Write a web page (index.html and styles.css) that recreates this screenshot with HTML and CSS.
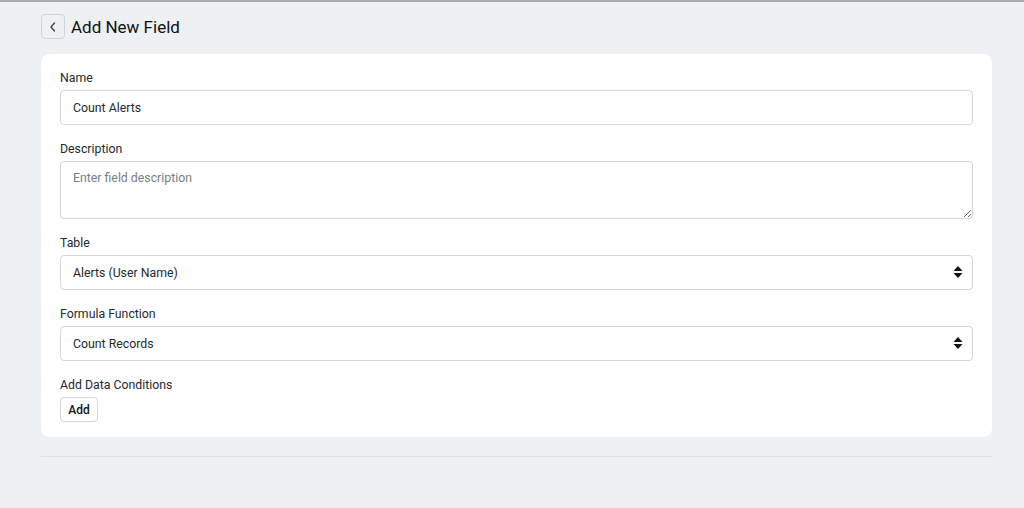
FILE: index.html
```html
<!DOCTYPE html>
<html lang="en">
<head>
    <meta charset="UTF-8">
    <meta name="viewport" content="width=device-width, initial-scale=1.0">
    <title>Add New Field</title>
    <link rel="stylesheet" href="styles.css">
</head>
<body>
    <div class="page">
        <div class="header">
            <button class="back-btn" aria-label="Back">
                <svg width="10" height="12" viewBox="0 0 10 12"><path d="M6.5 2 L3 6 L6.5 10" fill="none" stroke="#444" stroke-width="1.4" stroke-linecap="round" stroke-linejoin="round"/></svg>
            </button>
            <h1>Add New Field</h1>
        </div>

        <div class="card">
            <div class="field">
                <label>Name</label>
                <input type="text" class="input" value="Count Alerts">
            </div>

            <div class="field">
                <label>Description</label>
                <textarea class="input textarea" placeholder="Enter field description"></textarea>
            </div>

            <div class="field">
                <label>Table</label>
                <div class="select-wrap">
                    <select class="input select">
                        <option>Alerts (User Name)</option>
                    </select>
                    <svg class="select-arrow" width="10" height="14" viewBox="0 0 10 14"><path d="M5 1 L9.5 6 H0.5 Z M5 13 L9.5 8 H0.5 Z" fill="#111"/></svg>
                </div>
            </div>

            <div class="field">
                <label>Formula Function</label>
                <div class="select-wrap">
                    <select class="input select">
                        <option>Count Records</option>
                    </select>
                    <svg class="select-arrow" width="10" height="14" viewBox="0 0 10 14"><path d="M5 1 L9.5 6 H0.5 Z M5 13 L9.5 8 H0.5 Z" fill="#111"/></svg>
                </div>
            </div>

            <div class="field last">
                <label>Add Data Conditions</label>
                <div><button class="add-btn">Add</button></div>
            </div>
        </div>

        <hr class="divider">
    </div>
</body>
</html>
```

FILE: styles.css
```css
body {
    margin: 0;
    background-color: #eef1f4;
    border-top: 2px solid #a9abad;
    font-family: Roboto, "Liberation Sans", sans-serif;
    color: #1c1e21;
    height: 506px;
    overflow: hidden;
}

.page {
    width: 951px;
    margin-left: 41px;
    padding-top: 12px;
}

.header {
    display: flex;
    align-items: center;
    gap: 6px;
    height: 25px;
    margin-bottom: 15px;
}

.back-btn {
    width: 24px;
    height: 25px;
    padding: 0;
    display: flex;
    align-items: center;
    justify-content: center;
    background-color: #eef1f4;
    border: 1px solid #cfd3d8;
    border-radius: 4px;
}

.header h1 {
    margin: 0;
    font-size: 17px;
    font-weight: 400;
    color: #111;
}

.card {
    background-color: #fff;
    border-radius: 8px;
    padding: 14px 19px 15px;
    box-shadow: 0 0 1px rgba(0, 0, 0, 0.06);
}

.field {
    display: flex;
    flex-direction: column;
    margin-bottom: 14px;
}

.field.last {
    margin-bottom: 0;
}

.field label {
    font-size: 12.3px;
    line-height: 19px;
    padding-top: 1px;
    margin-bottom: 2px;
    color: #26292d;
}

.input {
    box-sizing: border-box;
    width: 100%;
    height: 35px;
    padding: 0 12px;
    border: 1px solid #d3d6da;
    border-radius: 4px;
    font-family: Roboto, "Liberation Sans", sans-serif;
    font-size: 12.3px;
    color: #26292d;
    background-color: #fff;
    outline: none;
}

.textarea {
    height: 58px;
    padding: 9px 12px;
    resize: vertical;
}

.textarea::placeholder {
    color: #7a7e83;
}

.select-wrap {
    position: relative;
}

.select {
    appearance: none;
    -webkit-appearance: none;
}

.select-arrow {
    position: absolute;
    right: 10px;
    top: 10px;
    pointer-events: none;
}

.add-btn {
    height: 25px;
    width: 38px;
    padding: 0;
    background-color: #fff;
    border: 1px solid #d3d6da;
    border-radius: 4px;
    font-family: Roboto, "Liberation Sans", sans-serif;
    font-size: 12px;
    font-weight: 500;
    color: #111;
}

.divider {
    border: none;
    border-top: 1px solid #dde1e5;
    margin: 19px 0 0;
}
```
